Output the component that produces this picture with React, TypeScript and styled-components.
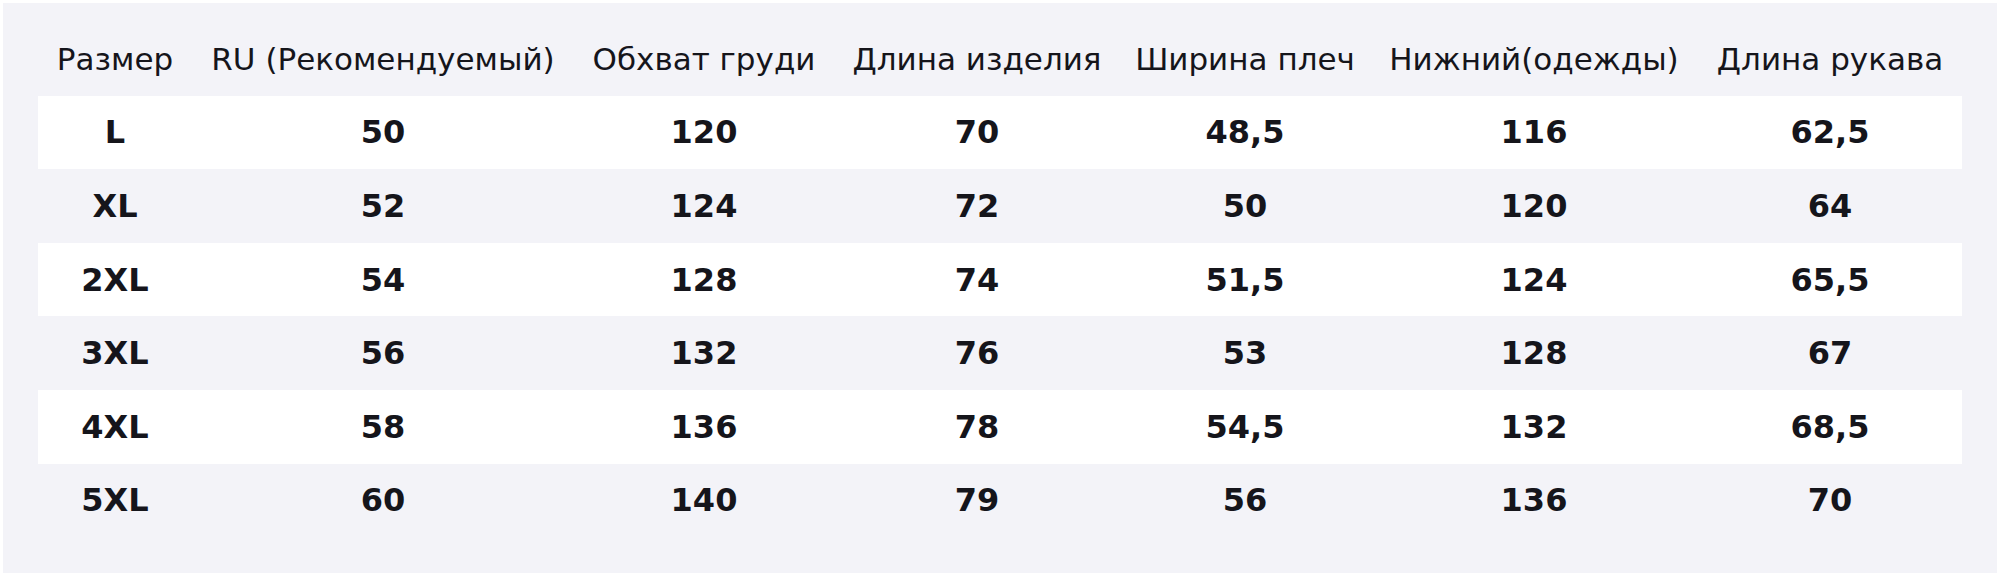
import React from 'react';
import styled, {createGlobalStyle} from 'styled-components';


const GlobalStyle = createGlobalStyle`
    html, body {
        margin: 0;
        padding: 0;
        background: #ffffff;
    }
    body {
        font-family: "DejaVu Sans", "Liberation Sans", sans-serif;
        color: #15151b;
    }
`

const COLUMNS = '154px 382px 260px 286px 250px 328px 1fr'

const Panel = styled.div`
    margin: 3px;
    height: 570px;
    box-sizing: border-box;
    background-color: #f3f3f8;
    padding: 19px 35px 0 35px;
`

const Row = styled.div<{$striped?: boolean}>`
    display: grid;
    grid-template-columns: ${COLUMNS};
    align-items: center;
    height: 73.6px;
    background-color: ${props => props.$striped ? '#ffffff' : 'transparent'};
`

const HeadCell = styled.div`
    text-align: center;
    font-size: 31px;
    font-weight: normal;
    white-space: nowrap;
`

const Cell = styled.div`
    text-align: center;
    font-size: 32px;
    font-weight: bold;
    white-space: nowrap;
`

const headers = [
    'Размер',
    'RU (Рекомендуемый)',
    'Обхват груди',
    'Длина изделия',
    'Ширина плеч',
    'Нижний(одежды)',
    'Длина рукава',
]

const rows = [
    ['L', '50', '120', '70', '48,5', '116', '62,5'],
    ['XL', '52', '124', '72', '50', '120', '64'],
    ['2XL', '54', '128', '74', '51,5', '124', '65,5'],
    ['3XL', '56', '132', '76', '53', '128', '67'],
    ['4XL', '58', '136', '78', '54,5', '132', '68,5'],
    ['5XL', '60', '140', '79', '56', '136', '70'],
]

const App: React.FC = () => {

    return (
        <>
            <GlobalStyle/>
            <Panel>
                <Row>
                    {headers.map(h => <HeadCell key={h}>{h}</HeadCell>)}
                </Row>
                {
                    rows.map((row, i) => (
                        <Row key={row[0]} $striped={i % 2 === 0}>
                            {row.map((v, j) => <Cell key={j}>{v}</Cell>)}
                        </Row>
                    ))
                }
            </Panel>
        </>
    )
}

export default App;
